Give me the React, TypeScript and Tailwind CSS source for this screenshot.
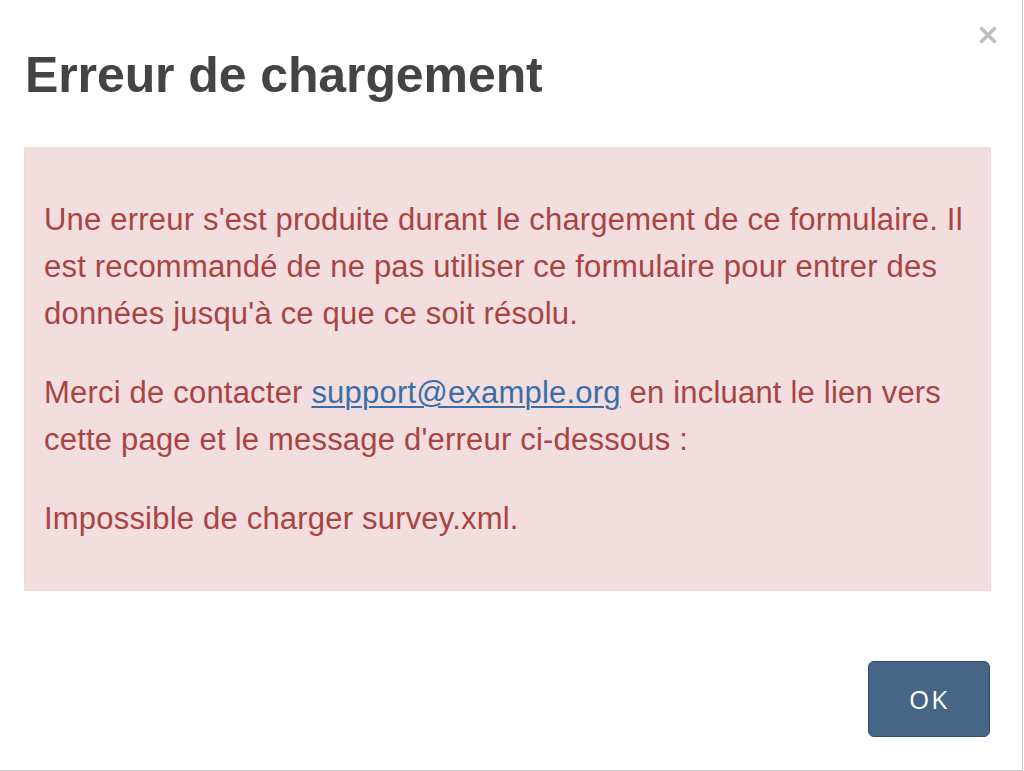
export default function App() {
  return (
    <div
      className="relative flex flex-col w-[1023px] h-[771px] bg-white border-r border-b border-[#c6c6c6]"
      style={{ fontFamily: '"Liberation Sans", Arial, sans-serif' }}
    >
      <button className="absolute top-[25px] right-[24px] w-[20px] h-[20px] text-[#bdbdbd]" aria-label="Fermer">
        <svg viewBox="0 0 20 20" width="20" height="20">
          <path d="M2.5 2.5 L17.5 17.5 M17.5 2.5 L2.5 17.5" stroke="currentColor" strokeWidth="3.4" strokeLinecap="butt" />
        </svg>
      </button>

      <h1 className="pl-[25px] pt-[50px] text-[50px] leading-none font-bold text-[#444444] tracking-[-0.1px]">
        Erreur de chargement
      </h1>

      <div className="ml-[24px] mr-[31px] mt-[47px] px-[19px] py-[48px] bg-[#f2dede] border border-[#f0d8d9] text-[#a94442] text-[31px] leading-[47px] tracking-[0.2px]">
        <p className="mb-[32px]">
          Une erreur s'est produite durant le chargement de ce formulaire. Il est recommandé de ne pas utiliser ce
          formulaire pour entrer des données jusqu'à ce que ce soit résolu.
        </p>
        <p className="mb-[32px]">
          Merci de contacter{' '}
          <a href="#" className="text-[#3b6ea8] underline decoration-2 underline-offset-[3px]">
            support@example.org
          </a>{' '}
          en incluant le lien vers cette page et le message d'erreur ci-dessous :
        </p>
        <p>Impossible de charger survey.xml.</p>
      </div>

      <div className="flex justify-end mr-[32px] mt-[70px]">
        <button
          className="w-[122px] h-[76px] rounded-[6px] bg-[#476587] border border-[#2e4b70] text-white text-[26px] tracking-[2px]"
          style={{ fontFamily: '"Open Sans", sans-serif' }}
        >
          OK
        </button>
      </div>
    </div>
  );
}
